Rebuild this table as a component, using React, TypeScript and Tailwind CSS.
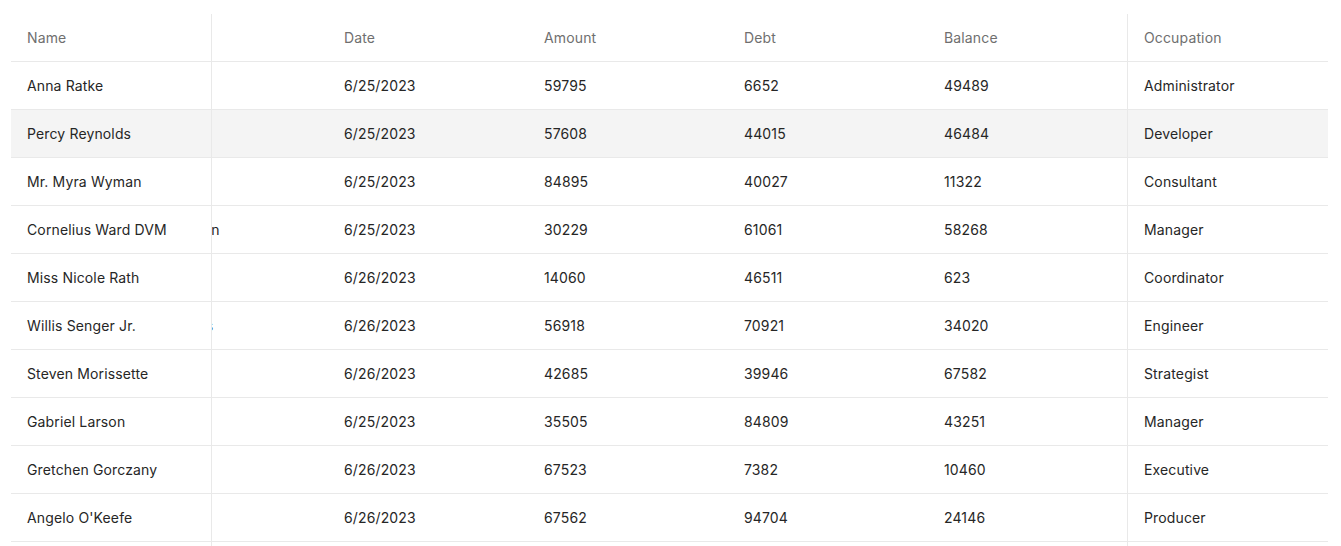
import React from 'react';

type Row = {
  name: string;
  city: string;
  date: string;
  amount: number;
  debt: number;
  balance: number;
  occupation: string;
};

const rows: Row[] = [
  { name: 'Anna Ratke', city: 'Austin', date: '6/25/2023', amount: 59795, debt: 6652, balance: 49489, occupation: 'Administrator' },
  { name: 'Percy Reynolds', city: 'Denver', date: '6/25/2023', amount: 57608, debt: 44015, balance: 46484, occupation: 'Developer' },
  { name: 'Mr. Myra Wyman', city: 'Tulsa', date: '6/25/2023', amount: 84895, debt: 40027, balance: 11322, occupation: 'Consultant' },
  { name: 'Cornelius Ward DVM', city: 'Wilmington', date: '6/25/2023', amount: 30229, debt: 61061, balance: 58268, occupation: 'Manager' },
  { name: 'Miss Nicole Rath', city: 'Fresno', date: '6/26/2023', amount: 14060, debt: 46511, balance: 623, occupation: 'Coordinator' },
  { name: 'Willis Senger Jr.', city: 'Las Vegas', date: '6/26/2023', amount: 56918, debt: 70921, balance: 34020, occupation: 'Engineer' },
  { name: 'Steven Morissette', city: 'Boston', date: '6/26/2023', amount: 42685, debt: 39946, balance: 67582, occupation: 'Strategist' },
  { name: 'Gabriel Larson', city: 'Miami', date: '6/25/2023', amount: 35505, debt: 84809, balance: 43251, occupation: 'Manager' },
  { name: 'Gretchen Gorczany', city: 'Omaha', date: '6/26/2023', amount: 67523, debt: 7382, balance: 10460, occupation: 'Executive' },
  { name: "Angelo O'Keefe", city: 'Dallas', date: '6/26/2023', amount: 67562, debt: 94704, balance: 24146, occupation: 'Producer' },
  { name: 'Lela Kuhn', city: 'Reno', date: '6/25/2023', amount: 12873, debt: 5120, balance: 7753, occupation: 'Analyst' },
];

const cell = 'w-[200px] shrink-0 px-4 pt-px flex items-center whitespace-nowrap';

function TableRow({ cells, header, hover }: { cells: string[]; header?: boolean; hover?: boolean }) {
  const [name, city, date, amount, debt, balance, occupation] = cells;
  return (
    <div
      className={`flex h-12 border-b border-[#e9e9e9] ${header ? 'text-[#6f6f6f]' : 'text-[#262626]'} ${hover ? 'bg-[#f4f4f4]' : 'bg-white'}`}
    >
      <div className="w-[201px] shrink-0 px-4 pt-px flex items-center whitespace-nowrap border-r border-[#e9e9e9]">{name}</div>
      {/* scrolled middle section */}
      <div className="flex-1 overflow-hidden">
        <div className="flex h-full -ml-[84px]">
          <div className={cell}>{city}</div>
          <div className={cell}>{date}</div>
          <div className={cell}>{amount}</div>
          <div className={cell}>{debt}</div>
          <div className={cell}>{balance}</div>
        </div>
      </div>
      <div className="w-[201px] shrink-0 px-4 pt-px flex items-center whitespace-nowrap border-l border-[#e9e9e9]">{occupation}</div>
    </div>
  );
}

export default function App() {
  return (
    <div className="h-[546px] overflow-hidden bg-white pl-[11px] pr-[13px] pt-[14px] font-['Inter',sans-serif] text-sm tracking-[0.01em]">
      <TableRow header cells={['Name', '', 'Date', 'Amount', 'Debt', 'Balance', 'Occupation']} />
      {rows.map((r, i) => (
        <TableRow
          key={r.name}
          hover={i === 1}
          cells={[r.name, r.city, r.date, String(r.amount), String(r.debt), String(r.balance), r.occupation]}
        />
      ))}
    </div>
  );
}
